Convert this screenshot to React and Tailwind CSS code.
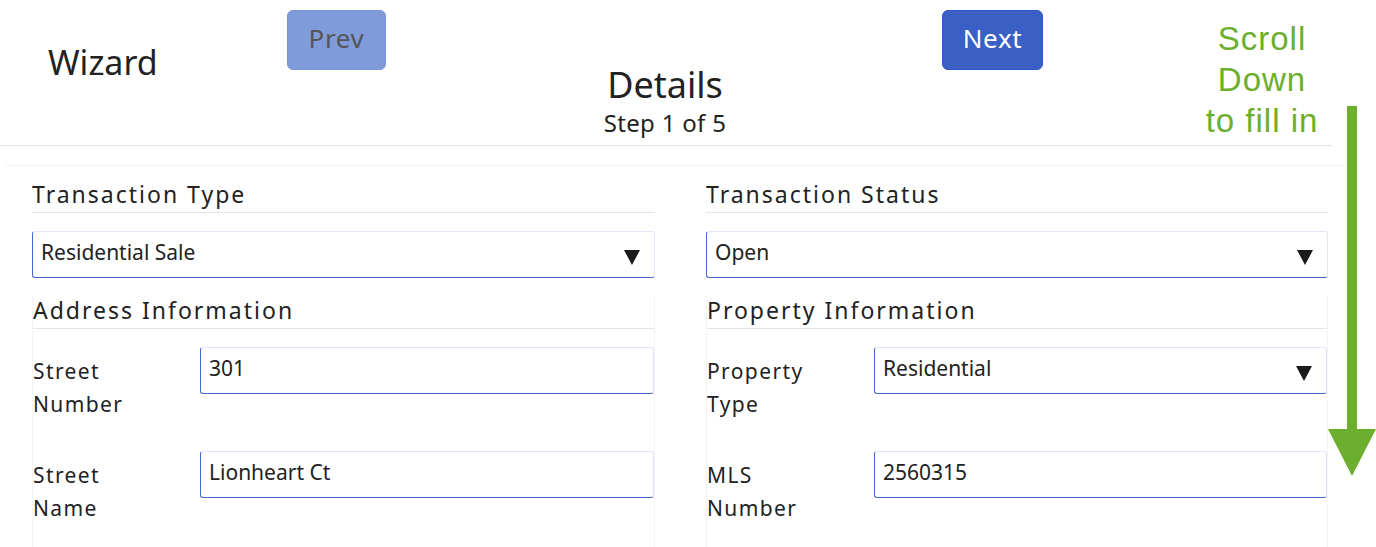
import React from 'react'

function SectionHeading({ children, className = '' }) {
  return (
    <h2
      className={`border-b border-[#e9e3e5] pb-[3px] text-[23px] leading-[30px] tracking-[2px] ${className}`}
    >
      {children}
    </h2>
  )
}

function Caret() {
  return (
    <svg className="h-[15px] w-[16px] self-center" viewBox="0 0 16 15">
      <polygon points="0,0 16,0 8,15" fill="#1a1a1a" />
    </svg>
  )
}

function Field({ value, select = false, className = '' }) {
  return (
    <div
      className={`flex h-[47px] items-start justify-between rounded-[3px] border border-[#e3e6f6] border-b-[#4469cc] border-l-[#4469cc] pt-[5px] pl-[8px] pr-[14px] text-[21px] leading-[30px] text-[#222] ${className}`}
    >
      <span>{value}</span>
      {select && <Caret />}
    </div>
  )
}

function Row({ label, value, select, className = '' }) {
  return (
    <div className={`flex items-start ${className}`}>
      <div className="w-[167px] pt-[8px] text-[21px] leading-[33px] tracking-[1.4px]">
        {label.map((l) => (
          <div key={l}>{l}</div>
        ))}
      </div>
      <Field value={value} select={select} className="flex-1" />
    </div>
  )
}

function Column({ top, topValue, section, rows }) {
  return (
    <div>
      <SectionHeading>{top}</SectionHeading>
      <Field value={topValue} select className="mt-[18px]" />
      <div className="min-h-[300px] border-x border-[#f4f4f7]">
        <SectionHeading className="mt-[17px]">{section}</SectionHeading>
        <Row className="mt-[18px]" {...rows[0]} />
        <Row className="mt-[30px]" {...rows[1]} />
      </div>
    </div>
  )
}

export default function App() {
  return (
    <div className="relative h-[547px] w-[1376px] overflow-hidden bg-white font-['Noto_Sans',sans-serif] text-[#222]">
      {/* header */}
      <header className="flex h-[146px] w-[1332px] border-b border-[#e2e2e2]">
        <div className="w-[287px] pl-[48px] pt-[42px] text-[34px] leading-[40px]">Wizard</div>
        <div className="flex w-[756px] flex-col">
          <div className="flex justify-between pt-[10px]">
            <button className="flex h-[60px] w-[99px] items-center justify-center rounded-md border border-[#7794dc] bg-[#7f9bda] pb-[4px] text-[26px] tracking-wide text-[#555]">
              Prev
            </button>
            <button className="flex h-[60px] w-[101px] items-center justify-center rounded-md border border-[#2f57cc] bg-[#3a5fc5] pb-[4px] text-[26px] tracking-wide text-white">
              Next
            </button>
          </div>
          <h1 className="text-center text-[36px] leading-[30px]">Details</h1>
          <p className="mt-[8px] text-center text-[24px] leading-[30px] tracking-[0.3px]">Step 1 of 5</p>
        </div>
      </header>

      {/* form */}
      <div className="mt-[19px] ml-[6px] w-[1337px] border-t border-[#f1f1f1] pl-[26px] pt-[13px]">
        <div className="grid w-[1296px] grid-cols-[623px_622px] gap-x-[51px]">
          <Column
            top="Transaction Type"
            topValue="Residential Sale"
            section="Address Information"
            rows={[
              { label: ['Street', 'Number'], value: '301' },
              { label: ['Street', 'Name'], value: 'Lionheart Ct' },
            ]}
          />
          <Column
            top="Transaction Status"
            topValue="Open"
            section="Property Information"
            rows={[
              { label: ['Property', 'Type'], value: 'Residential', select: true },
              { label: ['MLS', 'Number'], value: '2560315' },
            ]}
          />
        </div>
      </div>

      {/* annotation */}
      <div className="absolute left-[1162px] top-[18px] w-[200px] text-center font-['Liberation_Sans',Arial,sans-serif] text-[33px] leading-[41px] tracking-[1px] text-[#6cae2e]">
        Scroll
        <br />
        Down
        <br />
        to fill in
      </div>
      <svg className="absolute left-[1328px] top-[106px] h-[372px] w-[48px]" viewBox="0 0 48 372">
        <rect x="19" y="0" width="10" height="326" fill="#6cae2e" />
        <polygon points="0,323 48,323 24,370" fill="#6cae2e" />
      </svg>
    </div>
  )
}
